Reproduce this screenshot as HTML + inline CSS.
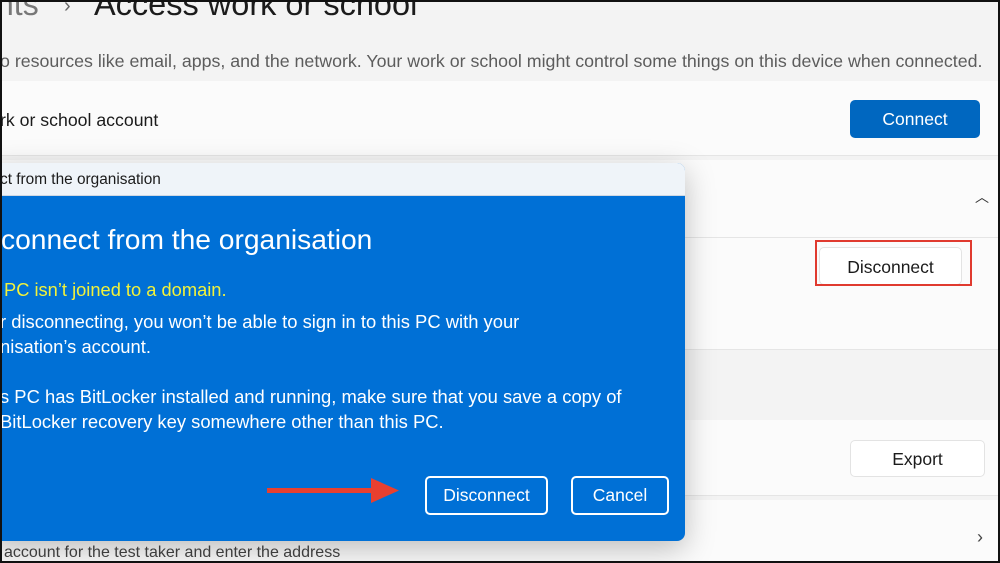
<!DOCTYPE html>
<html><head><style>
*{margin:0;padding:0;box-sizing:border-box}
body{width:1000px;height:563px;overflow:hidden;background:#f3f3f3;font-family:"Liberation Sans",sans-serif;position:relative}
.a{position:absolute;white-space:nowrap}
.card{position:absolute;left:0;right:0;background:#fbfbfb;border-bottom:1px solid #e5e5e5}
.btn{position:absolute;border-radius:5px;text-align:center;font-size:17.5px}
</style></head><body>
<div class="a" style="left:-4px;top:-14px;font-size:32px;color:#777">nts</div>
<div class="a" style="left:64px;top:-5px;font-size:20px;color:#666">›</div>
<div class="a" style="left:94px;top:-14px;font-size:32.5px;color:#1b1b1b">Access work or school</div>
<div class="a" style="left:0;top:51px;font-size:17.8px;color:#5c5c5c">o resources like email, apps, and the network. Your work or school might control some things on this device when connected.</div>
<div class="card" style="top:81px;height:75px"></div>
<div class="a" style="left:0;top:110px;font-size:17.7px;color:#1b1b1b">rk or school account</div>
<div class="btn" style="left:850px;top:100px;width:130px;height:38px;background:#0067c0;color:#fff;line-height:38px">Connect</div>
<div class="card" style="top:160px;height:78px"></div>
<div class="a" style="left:975px;top:187px;font-size:14px;color:#333">︿</div>
<div class="card" style="top:238px;height:112px"></div>
<div class="btn" style="left:819px;top:247px;width:143px;height:38px;background:#fff;border:1px solid #e3e3e3;color:#1b1b1b;line-height:38px">Disconnect</div>
<div class="a" style="left:815px;top:240px;width:157px;height:46px;border:2px solid #e03a2f"></div>
<div class="card" style="top:420px;height:76px"></div>
<div class="btn" style="left:850px;top:440px;width:135px;height:37px;background:#fff;border:1px solid #e3e3e3;color:#1b1b1b;line-height:36px">Export</div>
<div class="card" style="top:500px;height:63px"></div>
<div class="a" style="left:977px;top:527px;font-size:18px;color:#444">›</div>
<div class="a" style="left:4px;top:544px;font-size:16px;color:#444">account for the test taker and enter the address</div>
<div class="a" style="left:-10px;top:163px;width:695px;height:378px;border-radius:8px;overflow:hidden;box-shadow:0 8px 30px rgba(0,0,0,.25);background:#0070d6">
 <div style="height:33px;background:#eff4f9;border-bottom:1px solid #cfd8e3"></div>
</div>
<div class="a" style="left:0;top:171px;font-size:15.4px;color:#1b1b1b">ct from the organisation</div>
<div class="a" style="left:1px;top:223px;font-size:28.2px;color:#fff">connect from the organisation</div>
<div class="a" style="left:4px;top:279px;font-size:18.3px;color:#f2f23a">PC isn’t joined to a domain.</div>
<div class="a" style="left:0;top:309px;font-size:18.4px;color:#fff;line-height:25px">r disconnecting, you won’t be able to sign in to this PC with your<br>nisation’s account.</div>
<div class="a" style="left:0;top:384px;font-size:18.4px;color:#fff;line-height:25px">s PC has BitLocker installed and running, make sure that you save a copy of<br>BitLocker recovery key somewhere other than this PC.</div>
<div class="btn" style="left:425px;top:476px;width:123px;height:39px;border:2px solid #fff;color:#fff;line-height:35px">Disconnect</div>
<div class="btn" style="left:571px;top:476px;width:98px;height:39px;border:2px solid #fff;color:#fff;line-height:35px">Cancel</div>
<svg class="a" style="left:265px;top:476px" width="140" height="30"><rect x="2" y="12" width="110" height="5" fill="#e8402f"/><polygon points="106,2 134,14.5 106,27" fill="#e8402f"/></svg>
<div class="a" style="left:0;top:0;width:1000px;height:563px;border:2px solid #111"></div>
</body></html>
